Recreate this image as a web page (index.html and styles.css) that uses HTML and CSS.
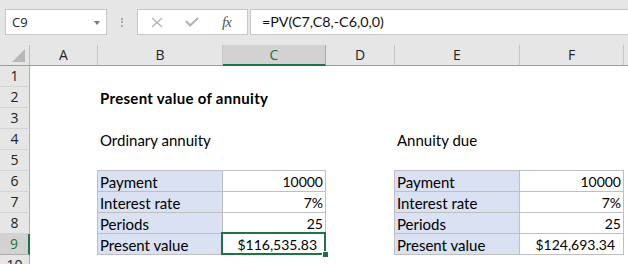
FILE: index.html
```html
<!DOCTYPE html>
<html>
<head>
<meta charset="utf-8">
<link rel="stylesheet" href="styles.css">
</head>
<body>
<div class="app">
  <div class="toolbar">
    <div class="namebox"><span class="nb-text">C9</span><span class="dd"></span></div>
    <div class="grip"><i></i><i></i><i></i></div>
    <div class="fnbox">
      <svg class="ic-x" width="12" height="11" viewBox="0 0 12 11"><path d="M1 1 L11 10 M11 1 L1 10" stroke="#b3b3b3" stroke-width="1.4" fill="none"/></svg>
      <svg class="ic-ok" width="14" height="10" viewBox="0 0 14 10"><path d="M1 4 L5 8.5 L13 1" stroke="#b3b3b3" stroke-width="2" fill="none"/></svg>
      <span class="fx">fx</span>
    </div>
    <div class="formula">=PV(C7,C8,-C6,0,0)</div>
  </div>
  <div class="sheet">
    <div class="corner"><span class="tri"></span></div>
    <div class="ch">A</div>
    <div class="ch">B</div>
    <div class="ch sel">C</div>
    <div class="ch">D</div>
    <div class="ch">E</div>
    <div class="ch">F</div>
    <div class="ch last"></div>

    <div class="rh r1">1</div>
    <div class="rh r2">2</div>
    <div class="rh r3">3</div>
    <div class="rh r4">4</div>
    <div class="rh r5">5</div>
    <div class="rh r6">6</div>
    <div class="rh r7">7</div>
    <div class="rh r8">8</div>
    <div class="rh r9 sel">9</div>
    <div class="rh r10">10</div>

    <div class="cell title r2 cB">Present value of annuity</div>
    <div class="cell r4 cB">Ordinary annuity</div>
    <div class="cell r4 cE">Annuity due</div>

    <div class="tbl tbl-left">
      <div class="lbl">Payment</div><div class="val">10000</div>
      <div class="lbl">Interest rate</div><div class="val">7%</div>
      <div class="lbl">Periods</div><div class="val">25</div>
      <div class="lbl">Present value</div><div class="val cur active">$116,535.83<span class="selbox"></span><span class="handle"></span></div>
    </div>

    <div class="tbl tbl-right">
      <div class="lbl">Payment</div><div class="val">10000</div>
      <div class="lbl">Interest rate</div><div class="val">7%</div>
      <div class="lbl">Periods</div><div class="val">25</div>
      <div class="lbl">Present value</div><div class="val cur">$124,693.34</div>
    </div>
  </div>
</div>
</body>
</html>
```

FILE: styles.css
```css
* { box-sizing: border-box; }
html, body { margin: 0; padding: 0; background: #ffffff; }
.app { width: 628px; height: 264px; overflow: hidden; font-family: Lato, "Open Sans", sans-serif; }

.toolbar {
  height: 45px;
  background: #e6e6e6;
  display: flex;
  align-items: flex-start;
  padding-top: 9px;
}
.namebox {
  margin-left: 5px;
  width: 102px;
  height: 26px;
  background: #fff;
  border: 1px solid #c6c6c6;
  display: flex;
  align-items: center;
  justify-content: space-between;
  padding: 0 6px 0 6px;
}
.nb-text { font-family: "Open Sans", sans-serif; font-size: 13px; color: #222; }
.dd {
  width: 0; height: 0;
  border-left: 3.5px solid transparent;
  border-right: 3.5px solid transparent;
  border-top: 4px solid #7a7a7a;
  margin-top: 1px;
}
.grip {
  width: 30px;
  height: 26px;
  display: flex;
  flex-direction: column;
  align-items: center;
  justify-content: center;
  gap: 1.5px;
}
.grip i { display: block; width: 2px; height: 2px; background: #a6a6a6; }
.fnbox {
  width: 111px;
  height: 26px;
  background: #fff;
  border: 1px solid #c6c6c6;
  display: flex;
  align-items: center;
  padding-left: 13px;
}
.ic-x { margin-top: 1px; }
.ic-ok { margin-left: 22px; margin-top: 0px; }
.fx {
  margin-left: 23px;
  font-family: "Liberation Serif", serif;
  font-style: italic;
  font-size: 15px;
  color: #555;
  letter-spacing: -1px;
}
.formula {
  flex: 1;
  margin-left: 2px;
  height: 26px;
  background: #fff;
  border: 1px solid #c6c6c6;
  border-right: none;
  font-size: 14.3px;
  color: #111;
  padding-left: 11px;
  line-height: 24px;
}

.sheet {
  height: 219px;
  overflow: hidden;
  display: grid;
  grid-template-columns: 30px 68px 125px 103px 69px 125px 104px 1fr;
  grid-template-rows: 21px repeat(10, 21px);
  background: #fff;
}
.corner {
  grid-column: 1; grid-row: 1;
  background: #e6e6e6;
  border-right: 1px solid #bdbdbd;
  border-bottom: 1px solid #9e9e9e;
  display: flex;
  align-items: flex-end;
  justify-content: flex-end;
  padding: 0 4px 3px 0;
}
.tri {
  width: 0; height: 0;
  border-left: 13px solid transparent;
  border-bottom: 13px solid #b8b8b8;
}
.ch {
  grid-row: 1;
  background: #e6e6e6;
  border-right: 1px solid #c4c4c4;
  border-bottom: 1px solid #9e9e9e;
  font-family: "Open Sans", sans-serif;
  font-size: 14px;
  line-height: 20px;
  color: #222;
  text-align: center;
}
.ch.sel {
  background: #d2d2d2;
  border-right-color: #a8a8a8;
  border-bottom: 2px solid #217346;
  color: #217346;
}
.ch.last { border-right: none; }

.rh {
  grid-column: 1;
  background: #e6e6e6;
  border-right: 1px solid #b0b0b0;
  border-bottom: 1px solid #d4d4d4;
  font-family: "Open Sans", sans-serif;
  font-size: 14px;
  line-height: 20px;
  color: #222;
  text-align: center;
}
.rh.sel {
  background: #d2d2d2;
  border-right: 2px solid #217346;
  border-bottom-color: #b0b0b0;
  color: #217346;
}
.r1 { grid-row: 2; }
.r2 { grid-row: 3; }
.r3 { grid-row: 4; }
.r4 { grid-row: 5; }
.r5 { grid-row: 6; }
.r6 { grid-row: 7; }
.r7 { grid-row: 8; }
.r8 { grid-row: 9; }
.r9 { grid-row: 10; }
.r10 { grid-row: 11; }
.cB { grid-column: 3 / 5; }
.cE { grid-column: 6 / 8; }

.cell {
  font-size: 15px;
  line-height: 20px;
  padding: 1px 0 0 2px;
  color: #000;
  white-space: nowrap;
}
.cell.title { font-weight: 700; letter-spacing: 0.3px; }

.tbl {
  grid-row: 7 / 11;
  margin: -1px 0 0 -1px;
  border-left: 1px solid #bfbfbf;
  border-top: 1px solid #bfbfbf;
  display: grid;
  grid-auto-rows: 21px;
}
.tbl-left { grid-column: 3 / 5; grid-template-columns: 125px 103px; }
.tbl-right { grid-column: 6 / 8; grid-template-columns: 125px 104px; }
.lbl, .val {
  border-right: 1px solid #bfbfbf;
  border-bottom: 1px solid #bfbfbf;
  line-height: 20px;
  padding-top: 1px;
  white-space: nowrap;
  color: #000;
}
.lbl { background: #d9e1f2; padding-left: 2px; font-size: 15px; }
.val { text-align: right; padding-right: 2px; font-size: 14px; }
.val.cur { padding-right: 8px; }
.active { position: relative; }
.selbox {
  position: absolute;
  left: -2px; top: -2px; right: -1px; bottom: -1px;
  border: 2px solid #217346;
}
.handle {
  position: absolute;
  right: -4px; bottom: -4px;
  width: 7px; height: 7px;
  background: #217346;
  border: 1px solid #fff;
}
```
